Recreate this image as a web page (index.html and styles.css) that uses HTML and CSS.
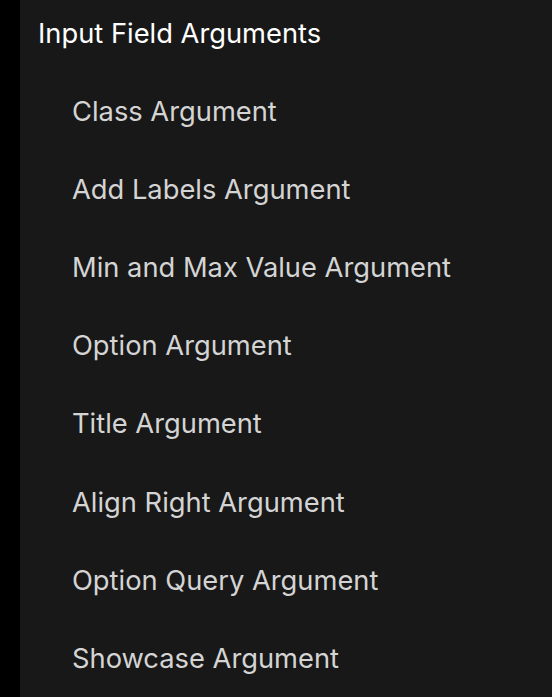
FILE: index.html
```html
<!DOCTYPE html>
<html lang="en">
<head>
    <meta charset="UTF-8">
    <meta name="viewport" content="width=device-width, initial-scale=1.0">
    <link rel="stylesheet" href="styles.css">
    <title>Input Field Arguments</title>
</head>
<body>
    <div class="strip"></div>
    <nav class="sidebar">
        <div class="section-title">Input Field Arguments</div>
        <ul class="links">
            <li>Class Argument</li>
            <li>Add Labels Argument</li>
            <li>Min and Max Value Argument</li>
            <li>Option Argument</li>
            <li>Title Argument</li>
            <li>Align Right Argument</li>
            <li>Option Query Argument</li>
            <li>Showcase Argument</li>
        </ul>
    </nav>
</body>
</html>
```

FILE: styles.css
```css
body {
    margin: 0;
    padding: 0;
    display: flex;
    height: 697px;
    overflow: hidden;
    background-color: #181818;
    font-family: Inter, "Noto Sans", sans-serif;
}

.strip {
    width: 20px;
    flex-shrink: 0;
    background-color: #000;
}

.sidebar {
    flex: 1;
    padding-left: 18px;
}

.section-title {
    color: #fff;
    font-size: 27.3px;
    line-height: 34px;
    margin-top: 17px;
}

.links {
    list-style: none;
    margin: 0;
    padding: 0 0 0 34px;
}

.links li {
    color: #d4d4d4;
    font-size: 27.3px;
    line-height: 34px;
    margin-top: 44.1px;
}
```
